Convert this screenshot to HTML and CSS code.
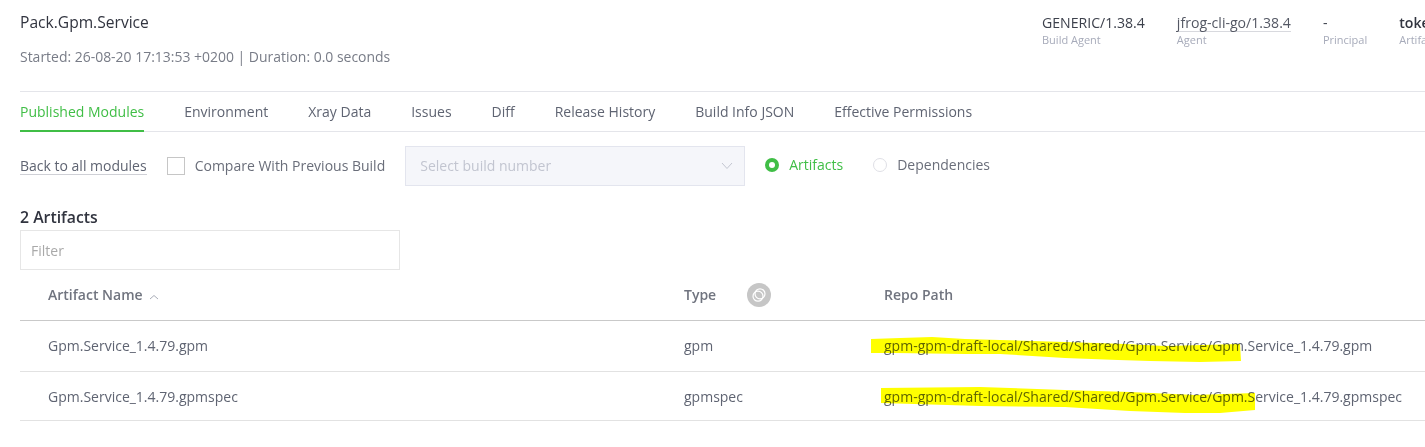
FILE: index.html
```html
<!DOCTYPE html>
<html lang="en">
<head>
<meta charset="utf-8">
<title>Pack.Gpm.Service</title>
<link rel="stylesheet" href="styles.css">
</head>
<body>
<div class="page">
  <header class="head">
    <div class="head-main">
      <div class="build-name">Pack.Gpm.Service</div>
      <div class="build-sub">Started: 26-08-20 17:13:53 +0200 | Duration: 0.0 seconds</div>
    </div>
    <div class="meta-list">
      <div class="meta"><div class="meta-value">GENERIC/1.38.4</div><div class="meta-label">Build Agent</div></div>
      <div class="meta"><div class="meta-value meta-link">jfrog-cli-go/1.38.4</div><div class="meta-label">Agent</div></div>
      <div class="meta"><div class="meta-value">-</div><div class="meta-label">Principal</div></div>
      <div class="meta"><div class="meta-value meta-strong">token</div><div class="meta-label">Artifactory Principal</div></div>
    </div>
  </header>

  <nav class="tabs">
    <a class="tab tab-active">Published Modules</a>
    <a class="tab">Environment</a>
    <a class="tab">Xray Data</a>
    <a class="tab">Issues</a>
    <a class="tab">Diff</a>
    <a class="tab">Release History</a>
    <a class="tab">Build Info JSON</a>
    <a class="tab">Effective Permissions</a>
  </nav>

  <div class="controls">
    <a class="back-link">Back to all modules</a>
    <span class="checkbox"></span>
    <span class="check-label">Compare With Previous Build</span>
    <div class="select">
      <span class="select-text">Select build number</span>
      <svg class="chevron" width="12" height="8" viewBox="0 0 12 8"><path d="M1 1l5 5.5L11 1" fill="none" stroke="#c3c6d1" stroke-width="1"/></svg>
    </div>
    <div class="radio-group">
      <span class="radio radio-on"></span><span class="radio-label radio-label-on">Artifacts</span>
      <span class="radio radio-off"></span><span class="radio-label">Dependencies</span>
    </div>
  </div>

  <h2 class="count">2 Artifacts</h2>
  <div class="filter">Filter</div>

  <div class="table">
    <div class="row row-head">
      <div class="cell cell-name"><span class="head-text">Artifact Name</span>
        <svg class="sort" width="10" height="6" viewBox="0 0 10 6"><path d="M1 5l4-3.5L9 5" fill="none" stroke="#a9adb8" stroke-width="1"/></svg>
      </div>
      <div class="cell cell-type"><span class="head-text">Type</span>
        <span class="group-btn"><svg width="24" height="24" viewBox="0 0 24 24"><circle cx="11" cy="13.2" r="5" fill="none" stroke="#fff" stroke-width="1.2"/><circle cx="13" cy="10.8" r="5" fill="none" stroke="#fff" stroke-width="1.2"/></svg></span>
      </div>
      <div class="cell cell-path"><span class="head-text">Repo Path</span></div>
    </div>
    <div class="row row-one">
      <div class="cell cell-name cell-up">Gpm.Service_1.4.79.gpm</div>
      <div class="cell cell-type cell-up">gpm</div>
      <div class="cell cell-path cell-up">gpm-gpm-draft-local/Shared/Shared/Gpm.Service/Gpm.Service_1.4.79.gpm</div>
      <svg class="marker marker-one" width="372" height="30" viewBox="0 0 372 30"><path d="M1 4L30 3L62 2L95 4L130 5L195 7L255 9L295 11L370 9L371 26L330 27L280 26L248 25L195 23L130 19L95 19L25 18L1 18Z" fill="#ffff00"/></svg>
    </div>
    <div class="row row-two">
      <div class="cell cell-name">Gpm.Service_1.4.79.gpmspec</div>
      <div class="cell cell-type">gpmspec</div>
      <div class="cell cell-path">gpm-gpm-draft-local/Shared/Shared/Gpm.Service/Gpm.Service_1.4.79.gpmspec</div>
      <svg class="marker marker-two" width="376" height="30" viewBox="0 0 376 30"><path d="M1 4L100 3L185 6L250 8L315 11L375 9L375 26L340 29L305 29L250 27L185 23L100 22L1 19Z" fill="#ffff00"/></svg>
    </div>
  </div>
</div>
</body>
</html>
```
FILE: styles.css
```css
html, body {
  margin: 0;
  padding: 0;
  background: #fff;
}
body {
  width: 1425px;
  height: 447px;
  overflow: hidden;
  font-family: "Open Sans", "Liberation Sans", sans-serif;
  font-size: 14px;
  color: #5f6472;
}
.page {
  padding-left: 20px;
  width: 1405px;
}
.head {
  display: flex;
  height: 91px;
  border-bottom: 1px solid #e4e5ea;
  overflow: hidden;
}
.head-main {
  flex: 0 0 1022px;
  padding-top: 12px;
}
.build-name {
  font-size: 15.6px;
  line-height: 20px;
  color: #31343f;
}
.build-sub {
  margin-top: 15px;
  font-size: 13.96px;
  line-height: 20px;
  color: #787c87;
}
.meta-list {
  display: flex;
  gap: 32px;
  min-width: 0;
  padding-top: 14px;
  white-space: nowrap;
}
.meta-value {
  font-size: 14.1px;
  line-height: 18px;
  color: #3d414c;
}
.meta-link {
  border-bottom: 1px solid #d8d9de;
  line-height: 16px;
  padding-top: 1px;
  color: #545864;
}
.meta-strong {
  font-weight: 600;
  color: #31343f;
}
.meta-label {
  font-size: 11px;
  line-height: 16px;
  color: #a7abba;
}
.tabs {
  display: flex;
  gap: 40px;
  height: 39px;
  border-bottom: 1px solid #e4e5ea;
}
.tab {
  box-sizing: border-box;
  height: 40px;
  line-height: 40px;
  font-size: 14px;
  color: #5f6472;
}
.tab-active {
  color: #40be46;
  border-bottom: 2px solid #40be46;
}
.controls {
  display: flex;
  align-items: center;
  height: 40px;
  margin-top: 14px;
}
.back-link {
  color: #5f6472;
  border-bottom: 1px solid #cfd0d6;
  line-height: 17px;
}
.checkbox {
  box-sizing: border-box;
  width: 18px;
  height: 18px;
  border: 1px solid #c6c6c6;
  margin-left: 20px;
}
.check-label {
  margin-left: 10px;
  margin-top: -2px;
  color: #6a6e7a;
}
.select {
  box-sizing: border-box;
  width: 340px;
  height: 40px;
  margin-left: 20px;
  padding: 0 11px 0 14px;
  display: flex;
  align-items: center;
  justify-content: space-between;
  background: #f5f6fa;
  border: 1px solid #e3e5ee;
  color: #c2c5d0;
}
.select-text {
  margin-top: -2px;
}
.radio-group {
  display: flex;
  align-items: center;
  margin-left: 20px;
  margin-top: -3px;
}
.radio {
  box-sizing: border-box;
  width: 14px;
  height: 14px;
  border-radius: 50%;
}
.radio-on {
  background: #40be46;
  padding: 4px;
}
.radio-on::after {
  content: "";
  display: block;
  width: 6px;
  height: 6px;
  background: #fff;
  border-radius: 50%;
}
.radio-off {
  border: 1px solid #dfe0e6;
  margin-left: 30px;
}
.radio-label {
  margin-left: 10px;
  color: #6a6e7a;
}
.radio-label-on {
  color: #40be46;
}
.count {
  margin: 21px 0 0;
  font-size: 15.8px;
  line-height: 20px;
  font-weight: 600;
  color: #31343f;
}
.filter {
  box-sizing: border-box;
  width: 380px;
  height: 40px;
  margin-top: 3px;
  padding-left: 10px;
  line-height: 40px;
  border: 1px solid #e6e6e6;
  color: #a9a9a9;
}
.row {
  position: relative;
  display: flex;
  align-items: center;
  box-sizing: border-box;
  border-bottom: 1px solid #e2e2e2;
}
.row-head {
  height: 51px;
  border-bottom: 1px solid #c9c9c9;
  font-weight: 600;
  color: #70747f;
  font-size: 14px;
}
.row-one { height: 51px; }
.row-two { height: 49px; }
.cell {
  position: relative;
  z-index: 1;
  white-space: nowrap;
}
.cell-up {
  margin-top: -2px;
}
.head-text {
  position: relative;
  top: -1px;
}
.cell-name {
  flex: 0 0 636px;
  padding-left: 28px;
  box-sizing: border-box;
}
.cell-type {
  flex: 0 0 200px;
  margin-left: 28px;
  display: flex;
  align-items: center;
}
.cell-path {
  flex: 1;
}
.sort {
  margin-left: 3px;
  vertical-align: 1px;
}
.group-btn {
  display: inline-flex;
  width: 24px;
  height: 24px;
  margin-left: 31px;
  border-radius: 50%;
  background: #c6c6c6;
}
.marker {
  position: absolute;
  z-index: 2;
  mix-blend-mode: multiply;
}
.marker-one { left: 850px; top: 14px; }
.marker-two { left: 860px; top: 12px; }
```
